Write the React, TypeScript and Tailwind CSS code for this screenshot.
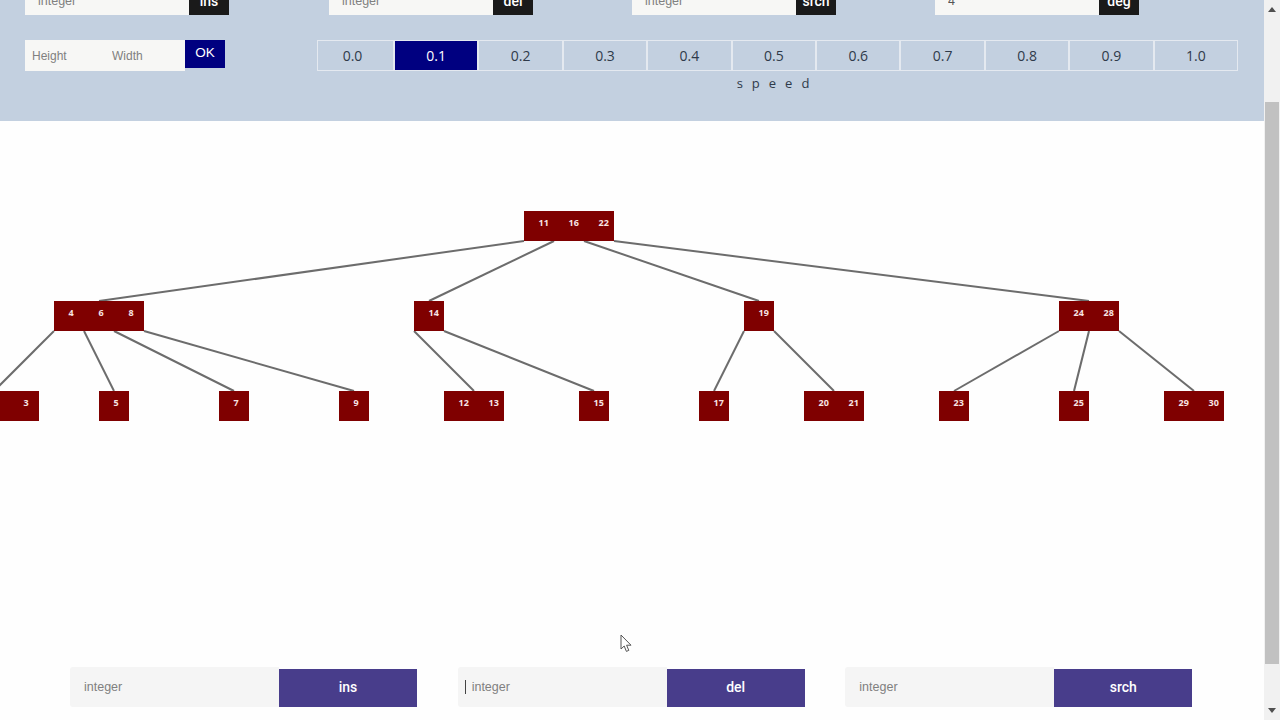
const topForms = [
  { label: "ins", value: "" },
  { label: "del", value: "" },
  { label: "srch", value: "" },
  { label: "deg", value: "4" },
];

const speeds = ["0.1", "0.2", "0.3", "0.4", "0.5", "0.6", "0.7", "0.8", "0.9", "1.0"];

const nodes = [
  { x: 524, y: 211, keys: [11, 16, 22] },
  { x: 54, y: 301, keys: [4, 6, 8] },
  { x: 414, y: 301, keys: [14] },
  { x: 744, y: 301, keys: [19] },
  { x: 1059, y: 301, keys: [24, 28] },
  { x: -51, y: 391, keys: [1, 2, 3] },
  { x: 99, y: 391, keys: [5] },
  { x: 219, y: 391, keys: [7] },
  { x: 339, y: 391, keys: [9] },
  { x: 444, y: 391, keys: [12, 13] },
  { x: 579, y: 391, keys: [15] },
  { x: 699, y: 391, keys: [17] },
  { x: 804, y: 391, keys: [20, 21] },
  { x: 939, y: 391, keys: [23] },
  { x: 1059, y: 391, keys: [25] },
  { x: 1164, y: 391, keys: [29, 30] },
];

// parent node index -> child node indexes, one per edge
const edges: [number, number[]][] = [
  [0, [1, 2, 3, 4]],
  [1, [5, 6, 7, 8]],
  [2, [9, 10]],
  [3, [11, 12]],
  [4, [13, 14, 15]],
];

const CELL = 30;
const NODE_H = 30;
const TOP = 121;

function TreeCanvas() {
  return (
    <div className="relative h-[546px] overflow-hidden">
      <svg className="absolute inset-0 h-full w-full" fill="none" stroke="#6c6c6c" strokeWidth="2">
        {edges.map(([parent, children]) =>
          children.map((child, i) => {
            const p = nodes[parent];
            const c = nodes[child];
            return (
              <line
                key={child}
                x1={p.x + i * CELL}
                y1={p.y + NODE_H - TOP}
                x2={c.x + (c.keys.length * CELL) / 2}
                y2={c.y - TOP}
              />
            );
          })
        )}
      </svg>
      {nodes.map((n) => (
        <div
          key={n.keys[0]}
          className="absolute flex h-[30px] bg-[#7f0000]"
          style={{ left: n.x, top: n.y - TOP }}
        >
          {n.keys.map((k) => (
            <span
              key={k}
              className="flex w-[30px] items-center pb-[6px] pl-[14.5px] font-['Open_Sans',sans-serif] text-[9px] font-bold text-[#f8e4e4]"
            >
              {k}
            </span>
          ))}
        </div>
      ))}
    </div>
  );
}

function BottomForm({ label, caret }: { label: string; caret?: boolean }) {
  return (
    <form className="flex h-10 w-[347px] items-end">
      <div className="relative h-10 w-[209px] rounded-l-[3px] bg-[#f5f5f5]">
        <input
          placeholder="integer"
          className="h-full w-full bg-transparent pl-[14px] font-['Liberation_Sans',sans-serif] text-[12.5px] outline-none placeholder:text-[#808080]"
        />
        {caret && <span className="absolute top-[13px] left-[7px] h-[14px] w-px bg-[#444444]" />}
      </div>
      <button
        type="button"
        className="h-[38px] w-[138px] bg-[#483d8b] pb-[2px] font-['Roboto',sans-serif] text-[14px] font-medium text-white"
      >
        {label}
      </button>
    </form>
  );
}

export default function App() {
  return (
    <div className="flex h-[720px] w-[1280px] overflow-hidden bg-[#fefefe]">
      <main className="flex w-[1264px] flex-col">
        <section className="h-[121px] overflow-hidden bg-[#c3d0e0]">
          <div className="-mt-[13px] ml-[25px] grid grid-cols-[304px_303px_303px_204px]">
            {topForms.map((f) => (
              <form key={f.label} className="flex h-[28px] w-[204px]">
                <input
                  defaultValue={f.value}
                  placeholder="integer"
                  className="w-[164px] bg-[#f7f7f5] pl-[13px] font-['Liberation_Sans',sans-serif] text-[12.5px] text-[#555555] outline-none placeholder:text-[#808080]"
                />
                <button
                  type="button"
                  className="w-10 bg-[#1a1a1a] font-['Roboto',sans-serif] text-[14px] font-medium text-white"
                >
                  {f.label}
                </button>
              </form>
            ))}
          </div>
          <div className="mt-[25px] ml-[25px] flex">
            <form className="flex h-[31px] items-start">
              <div className="flex h-[31px] w-40 bg-[#f7f7f5]">
                <input
                  placeholder="Height"
                  className="w-[75px] bg-transparent pl-[7px] font-['Liberation_Sans',sans-serif] text-[12px] outline-none placeholder:text-[#808080]"
                />
                <input
                  placeholder="Width"
                  className="w-[85px] bg-transparent pl-[12px] font-['Liberation_Sans',sans-serif] text-[12px] outline-none placeholder:text-[#808080]"
                />
              </div>
              <button
                type="button"
                className="h-[28px] w-10 bg-[#000080] pb-[1px] font-['Liberation_Sans',sans-serif] text-[13.5px] text-white"
              >
                OK
              </button>
            </form>
            <div className="ml-[92px] w-[921px]">
              <div className="flex h-[31px] border-y border-[#e4e9f0]">
                <button
                  type="button"
                  className="w-[77px] border-x border-[#e4e9f0] pr-[6px] font-['Open_Sans',sans-serif] text-[14px] text-[#2f3a4a]"
                >
                  0.0
                </button>
                {speeds.map((s) => (
                  <button
                    key={s}
                    type="button"
                    className={
                      s === "0.1"
                        ? "flex-1 border-x border-[#e4e9f0] bg-[#000080] font-['Open_Sans',sans-serif] text-[14px] text-white"
                        : "flex-1 border-x border-[#e4e9f0] font-['Open_Sans',sans-serif] text-[14px] text-[#2f3a4a]"
                    }
                  >
                    {s}
                  </button>
                ))}
              </div>
              <p className="mt-[2px] text-center font-['Open_Sans',sans-serif] text-[13px] leading-[20px] tracking-[9px] text-[#2f3a4a]">
                speed
              </p>
            </div>
          </div>
        </section>
        <TreeCanvas />
        <div className="ml-[70px] grid w-[1163px] grid-cols-3">
          <BottomForm label="ins" />
          <BottomForm label="del" caret />
          <BottomForm label="srch" />
        </div>
      </main>

      {/* drawn scrollbar, page is scrolled down a bit in the shot */}
      <aside className="flex w-4 flex-col items-center bg-[#f1f1f1]">
        <div className="flex h-[102px] w-full justify-center pt-[7px]">
          <svg width="8" height="5" viewBox="0 0 8 5">
            <path d="M4 0 8 5H0z" fill="#505050" />
          </svg>
        </div>
        <div className="h-[562px] w-[14px] bg-[#c1c1c1]" />
        <div className="flex w-full flex-1 items-end justify-center pb-[7px]">
          <svg width="8" height="5" viewBox="0 0 8 5">
            <path d="M0 0h8L4 5z" fill="#505050" />
          </svg>
        </div>
      </aside>

      {/* mouse pointer */}
      <svg className="absolute top-[634px] left-[620px]" width="14" height="20" viewBox="0 0 14 20">
        <path
          d="M1 1v14l3.2-3 2.2 5.4 2.4-1-2.2-5.2h4.4z"
          fill="#fff"
          stroke="#555"
          strokeWidth="1"
          strokeLinejoin="round"
        />
      </svg>
    </div>
  );
}
